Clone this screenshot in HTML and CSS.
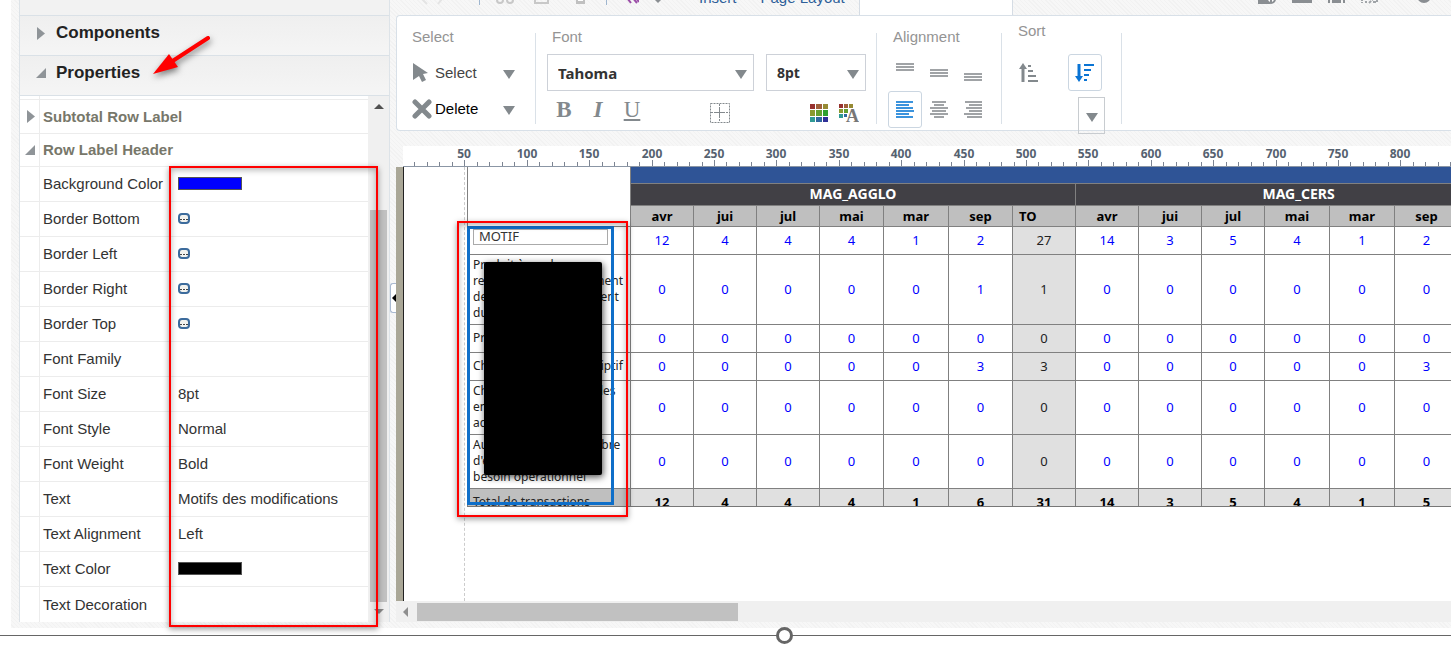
FILE: index.html
```
<!DOCTYPE html>
<html lang="en">
<head>
    <meta charset="UTF-8">
    <meta name="viewport" content="width=device-width, initial-scale=1.0">
    <title>Layout Editor</title>
    <link rel="stylesheet" href="styles.css">
</head>
<body>
    <div class="app">
        <!-- Left panel -->
        <aside class="sidebar">
            <div class="panel-strip"></div>
            <button type="button" class="panel-header">
                <svg class="closed" width="9" height="13"><path d="M0 0L8 6.500L0 13z"/></svg>
                Components
            </button>
            <button type="button" class="panel-header">
                <svg width="10" height="10"><path d="M10 0V10H0z"/></svg>
                Properties
            </button>
            <svg class="arrow" width="74" height="54">
                <path d="M66 10L26 36" stroke="#f00" stroke-width="4" stroke-linecap="round"/>
                <path d="M11 46L27 26L36 39z" fill="#f00"/>
            </svg>
            <div class="tree">
                <table class="props">
                    <colgroup><col class="indent"><col class="name"><col></colgroup>
                    <tr class="stub"><td></td><td colspan="2"></td></tr>
                    <tr class="group">
                        <td><svg width="8" height="13"><path d="M0 0L8 6.500L0 13z"/></svg></td>
                        <th colspan="2">Subtotal Row Label</th>
                    </tr>
                    <tr class="group open">
                        <td><svg width="10" height="10"><path d="M10 0V10H0z"/></svg></td>
                        <th colspan="2">Row Label Header</th>
                    </tr>
                    <tr><td></td><td>Background Color</td><td><span class="swatch blue"></span></td></tr>
                    <tr><td></td><td>Border Bottom</td><td><button type="button" class="more" aria-label="Edit border bottom"></button></td></tr>
                    <tr><td></td><td>Border Left</td><td><button type="button" class="more" aria-label="Edit border left"></button></td></tr>
                    <tr><td></td><td>Border Right</td><td><button type="button" class="more" aria-label="Edit border right"></button></td></tr>
                    <tr><td></td><td>Border Top</td><td><button type="button" class="more" aria-label="Edit border top"></button></td></tr>
                    <tr><td></td><td>Font Family</td><td></td></tr>
                    <tr><td></td><td>Font Size</td><td>8pt</td></tr>
                    <tr><td></td><td>Font Style</td><td>Normal</td></tr>
                    <tr><td></td><td>Font Weight</td><td>Bold</td></tr>
                    <tr><td></td><td>Text</td><td>Motifs des modifications</td></tr>
                    <tr><td></td><td>Text Alignment</td><td>Left</td></tr>
                    <tr><td></td><td>Text Color</td><td><span class="swatch black"></span></td></tr>
                    <tr><td></td><td>Text Decoration</td><td></td></tr>
                </table>
                <div class="vscroll">
                    <svg width="10" height="5"><path d="M0 5L5 0L10 5z" fill="#505050"/></svg>
                    <div class="thumb"></div>
                    <svg width="10" height="5"><path d="M0 0H10L5 5z" fill="#8a8a8a"/></svg>
                </div>
                <div class="highlight props-highlight"></div>
            </div>
        </aside>

        <div class="splitter">
            <button type="button" aria-label="Collapse panel"><svg width="4" height="8"><path d="M4 0V8L0 4z"/></svg></button>
        </div>

        <main>
            <!-- Menu bar -->
            <div class="menubar">
                <nav>
                    <div class="tools">
                        <svg class="undo" width="30" height="16"><path d="M4 9l5 5M24 9l-4 5" fill="none" stroke="#e4e4e4" stroke-width="2"/></svg>
                        <i class="bar"></i>
                        <svg class="cut" width="18" height="16" fill="none" stroke="#c8c8c8" stroke-width="2"><circle cx="4" cy="10" r="3"/><circle cx="14" cy="10" r="3"/></svg>
                        <svg class="copy" width="20" height="16" fill="none" stroke="#c8c8c8" stroke-width="2"><path d="M5 3V13H18V3M8 9H15M0 8H3"/></svg>
                        <svg class="paste" width="20" height="16" fill="#c0c0c0"><path d="M0 8H8V10H0zM10 4H19V14H10z"/><path d="M12 9H17V11H12z" fill="#fff"/></svg>
                        <i class="bar"></i>
                        <svg class="find" width="14" height="16" fill="none" stroke="#9b4fa8" stroke-width="2"><path d="M7 4L2 8L6 13M7 7L12 13M9 5L14 12"/></svg>
                        <svg width="12" height="16"><path d="M0 7H12L6 13z" fill="#8a8e92"/></svg>
                    </div>
                    <a href="#">Insert</a>
                    <a href="#" class="page-layout">Page Layout</a>
                    <span class="tab"></span>
                    <div class="actions">
                        <svg width="18" height="16" fill="#8a8e92"><path d="M0 0H12V14H0z"/><circle cx="13" cy="9" r="4" fill="#fff" stroke="#8a8e92" stroke-width="2"/><path d="M12 6H14V12H12z"/></svg>
                        <svg width="20" height="16" fill="#8a8e92"><path d="M0 3H20V13H0z"/></svg>
                        <svg width="17" height="16" fill="#8a8e92"><path d="M0 0H2V13H0zM4 8H13V13H4zM15 0H17V13H15z"/></svg>
                        <svg width="17" height="16" fill="none" stroke="#a0a4a8" stroke-width="2"><path d="M1 0V13M5 7V13M8 13L14 7M12 12H16V4" stroke-dasharray="3 1"/></svg>
                        <svg class="help" width="17" height="16" fill="#8a8e92"><circle cx="8" cy="6" r="7"/><path d="M7 8H10V10H7z" fill="#fff"/></svg>
                    </div>
                </nav>
            </div>

            <!-- Toolbar -->
            <div class="toolbar">
                <section class="select-group">
                    <h2>Select</h2>
                    <div class="row">
                        <button type="button" class="cmd">
                            <svg width="20" height="20" fill="#83898d"><path d="M1 0L16 10L11 11L14 17L10 19L7 13L1 17z"/></svg>
                            Select
                            <svg class="caret" width="12" height="9"><path d="M0 0H12L6 9z"/></svg>
                        </button>
                    </div>
                    <div class="row">
                        <button type="button" class="cmd delete">
                            <svg width="20" height="20"><path d="M3 3L17 17M17 3L3 17" stroke="#83898d" stroke-width="5" stroke-linecap="round"/></svg>
                            Delete
                            <svg class="caret" width="12" height="9"><path d="M0 0H12L6 9z"/></svg>
                        </button>
                    </div>
                </section>
                <i class="sep"></i>
                <section class="font-group">
                    <h2>Font</h2>
                    <div class="row">
                        <div class="combo family">
                            <select aria-label="Font family"><option>Tahoma</option></select>
                            <svg width="12" height="9"><path d="M0 0H12L6 9z"/></svg>
                        </div>
                        <div class="combo size">
                            <select aria-label="Font size"><option>8pt</option></select>
                            <svg width="12" height="9"><path d="M0 0H12L6 9z"/></svg>
                        </div>
                    </div>
                    <div class="row styles">
                        <button type="button" class="b">B</button>
                        <button type="button" class="i">I</button>
                        <button type="button" class="u">U</button>
                        <button type="button" class="borders" aria-label="Borders">
                            <svg width="20" height="20" fill="none" stroke="#83898d"><path d="M0.500 0.500H19.500V19.500H0.500zM9.500 1V7M9.500 13V19M1 9.500H7M13 9.500H19" stroke-dasharray="2 1"/><path d="M6 9.500H14M9.500 6V14"/></svg>
                        </button>
                        <button type="button" class="fill" aria-label="Background color">
                            <svg width="18" height="18">
                                <path d="M0 0h5v5h-5z" fill="#97312f"/><path d="M6 0h6v5h-6z" fill="#a0603a"/><path d="M13 0h5v5h-5z" fill="#968a34"/>
                                <path d="M0 6h5v6h-5z" fill="#8a9a30"/><path d="M6 6h6v6h-6z" fill="#63a030"/><path d="M13 6h5v6h-5z" fill="#30a030"/>
                                <path d="M0 13h5v5h-5z" fill="#309a94"/><path d="M6 13h6v5h-6z" fill="#3068a0"/><path d="M13 13h5v5h-5z" fill="#303098"/>
                            </svg>
                        </button>
                        <button type="button" class="color" aria-label="Font color">
                            <svg width="20" height="20">
                                <path d="M0 1h4v4h-4z" fill="#97312f"/><path d="M5 1h4v4h-4z" fill="#a0603a"/><path d="M10 1h4v4h-4z" fill="#968a34"/>
                                <path d="M0 6h4v4h-4z" fill="#8a9a30"/><path d="M5 6h4v4h-4z" fill="#63a030"/><path d="M0 11h4v4h-4z" fill="#309a94"/><path d="M5 11h3v3h-3z" fill="#3068a0"/>
                                <text x="7" y="19">A</text>
                            </svg>
                        </button>
                    </div>
                </section>
                <i class="sep"></i>
                <section class="align-group">
                    <h2>Alignment</h2>
                    <div class="row">
                        <button type="button" class="tool top" aria-label="Align top"><svg width="18" height="8"><path d="M0 1H18M0 4H18M0 7H18"/></svg></button>
                        <button type="button" class="tool" aria-label="Align middle"><svg width="18" height="8"><path d="M0 1H18M0 4H18M0 7H18"/></svg></button>
                        <button type="button" class="tool bottom" aria-label="Align bottom"><svg width="18" height="8"><path d="M0 1H18M0 4H18M0 7H18"/></svg></button>
                    </div>
                    <div class="row">
                        <button type="button" class="tool active" aria-label="Align left"><svg width="18" height="18"><path d="M0 1H17M0 4H13M0 7H17M0 10H18M0 13H13M0 16H17"/></svg></button>
                        <button type="button" class="tool" aria-label="Align center"><svg width="18" height="18"><path d="M2 1H16M4 4H14M0 7H18M2 10H16M0 13H18M4 16H14"/></svg></button>
                        <button type="button" class="tool" aria-label="Align right"><svg width="18" height="18"><path d="M1 1H18M5 4H18M2 7H18M5 10H18M0 13H18M3 16H18"/></svg></button>
                    </div>
                </section>
                <i class="sep"></i>
                <section class="sort-group">
                    <h2>Sort</h2>
                    <div class="row">
                        <button type="button" class="tool asc" aria-label="Sort ascending">
                            <svg width="20" height="20"><path d="M4 19V3" stroke="#83898d" stroke-width="3"/><path d="M9 3H12M9 8H14M9 13H17M9 18H19" stroke="#83898d" stroke-width="2"/><path d="M0 6L4 0L8 6z" fill="#83898d"/></svg>
                        </button>
                        <button type="button" class="tool active desc" aria-label="Sort descending">
                            <svg width="20" height="20"><path d="M4 1V16" stroke="#0a74d4" stroke-width="3"/><path d="M9 2H19M9 7H16M9 12H14M9 17H12" stroke="#0a74d4" stroke-width="2"/><path d="M0 13L4 19L8 13z" fill="#0a74d4"/></svg>
                        </button>
                    </div>
                    <button type="button" class="more-sort" aria-label="More sort options"><svg width="12" height="9"><path d="M0 0H12L6 9z"/></svg></button>
                </section>
                <i class="sep"></i>
            </div>

            <svg class="ruler" id="ruler" height="21"></svg>

            <!-- Report page -->
            <div class="canvas">
                <div class="margin-line"></div>
                <div class="report">
                    <div class="clip">
                        <table class="pivot">
                            <colgroup>
                                <col class="label">
                                <col class="w63"><col class="w63"><col class="w63"><col class="w64"><col class="w65"><col class="w64"><col class="w63">
                                <col class="w63"><col class="w63"><col class="w63"><col class="w65"><col class="w65"><col class="w64"><col class="w63">
                            </colgroup>
                            <thead>
                                <tr class="band"><td rowspan="3" class="corner"></td><td colspan="14"></td></tr>
                                <tr class="store"><th colspan="7">MAG_AGGLO</th><th colspan="7">MAG_CERS</th></tr>
                                <tr class="month"><th>avr</th><th>jui</th><th>jul</th><th>mai</th><th>mar</th><th>sep</th><th class="to">TO</th><th>avr</th><th>jui</th><th>jul</th><th>mai</th><th>mar</th><th>sep</th></tr>
                            </thead>
                            <tbody>
                                <tr class="h28"><th>S/O</th><td>12</td><td>4</td><td>4</td><td>4</td><td>1</td><td>2</td><td class="sum">27</td><td>14</td><td>3</td><td>5</td><td>4</td><td>1</td><td>2</td></tr>
                                <tr class="h70"><th>Produit à rendre<br>re<i></i>ement<br>de<i></i>ment<br>du</th><td>0</td><td>0</td><td>0</td><td>0</td><td>0</td><td>1</td><td class="sum">1</td><td>0</td><td>0</td><td>0</td><td>0</td><td>0</td><td>0</td></tr>
                                <tr class="h28"><th>Pr</th><td>0</td><td>0</td><td>0</td><td>0</td><td>0</td><td>0</td><td class="sum">0</td><td>0</td><td>0</td><td>0</td><td>0</td><td>0</td><td>0</td></tr>
                                <tr class="h28"><th>Ch<i></i>criptif</th><td>0</td><td>0</td><td>0</td><td>0</td><td>0</td><td>3</td><td class="sum">3</td><td>0</td><td>0</td><td>0</td><td>0</td><td>0</td><td>3</td></tr>
                                <tr class="h54"><th>Ch<i></i>elles<br>en<br>ac</th><td>0</td><td>0</td><td>0</td><td>0</td><td>0</td><td>0</td><td class="sum">0</td><td>0</td><td>0</td><td>0</td><td>0</td><td>0</td><td>0</td></tr>
                                <tr class="h54"><th>Au<i></i>mbre<br>d'e<br>besoin opérationnel</th><td>0</td><td>0</td><td>0</td><td>0</td><td>0</td><td>0</td><td class="sum">0</td><td>0</td><td>0</td><td>0</td><td>0</td><td>0</td><td>0</td></tr>
                                <tr class="total"><th>Total de transactions</th><td>12</td><td>4</td><td>4</td><td>4</td><td>1</td><td>6</td><td>31</td><td>14</td><td>3</td><td>5</td><td>4</td><td>1</td><td>5</td></tr>
                            </tbody>
                        </table>
                    </div>
                    <div class="selection"><span>MOTIF</span></div>
                    <div class="mask"></div>
                    <div class="highlight label-highlight"></div>
                </div>
            </div>

            <div class="hscroll">
                <svg width="5" height="10"><path d="M5 0V10L0 5z" fill="#8f8f8f"/></svg>
                <div class="track"><div class="thumb"></div></div>
            </div>
        </main>
    </div>

    <div class="divider"><span></span></div>
    <script src="ruler.js"></script>
</body>
</html>
```
FILE: styles.css
```
* {
    box-sizing: border-box;
}

body {
    margin: 0;
    font-family: "Liberation Sans", Arial, sans-serif;
    font-size: 15px;
    color: #333;
    background-color: #fff;
}

button {
    font: inherit;
    color: inherit;
    background: none;
    border: none;
    padding: 0;
}

svg {
    display: block;
    flex: none;
}

.app {
    display: flex;
    margin-left: 11px;
    padding: 0 0 6px 8px;
    background: repeating-linear-gradient(45deg, #f7f7f7 0 2px, #f2f2f2 2px 3px);
}

/* Left panel */
.sidebar {
    position: relative;
    flex: none;
    width: 371px;
    border: solid #dde3e8;
    border-width: 0 1px;
    background-color: #f2f2f2;
}

.panel-strip {
    height: 15px;
}

.panel-header {
    display: flex;
    align-items: center;
    gap: 10px;
    width: 100%;
    height: 40px;
    padding: 0 16px 5px;
    border-top: 1px solid #dae1e7;
    background: linear-gradient(#efefef, #f5f5f5);
    font-size: 17px;
    font-weight: bold;
    color: #222;
}

.panel-header svg {
    fill: #8f9498;
}

.panel-header .closed {
    margin-left: 1px;
}

.arrow {
    position: absolute;
    left: 122px;
    top: 28px;
    filter: drop-shadow(1px 3px 3px rgba(0, 0, 0, 0.5));
}

.tree {
    position: relative;
    display: flex;
    border-top: 1px solid #dae1e7;
    background-color: #fff;
}

.props {
    flex: 1;
    table-layout: fixed;
    border-spacing: 0;
}

.props .indent {
    width: 20px;
}

.props .name {
    width: 130px;
}

.props td,
.props th {
    height: 35px;
    padding: 0 0 1px 3px;
    border-bottom: 1px solid #ececec;
    text-align: left;
    white-space: nowrap;
}

.props td:first-child {
    padding: 0 0 1px;
    border-right: 1px solid #ececec;
}

.props td:nth-child(3) {
    padding-left: 8px;
}

.props tr:last-child td {
    border-bottom: none;
}

.props .stub td {
    height: 4px;
}

.props .group td,
.props .group th {
    height: 34px;
    color: #77776a;
}

.props .open td,
.props .open th {
    height: 33px;
}

.props .group svg {
    margin-left: 7px;
    fill: #8f9498;
}

.props .open svg {
    margin-left: 5px;
}

.swatch {
    display: block;
    width: 64px;
    height: 13px;
    border: 1px solid #555;
}

.blue {
    background-color: #00f;
}

.black {
    background-color: #000;
}

.more {
    display: block;
    width: 12px;
    height: 11px;
    border: 2px solid #3c6b9c;
    border-radius: 4px;
    background: repeating-linear-gradient(90deg, #444 0 2px, #fff 2px 3px) 0 4px / 8px 1px no-repeat #f2f2ee;
}

.vscroll {
    display: flex;
    flex-direction: column;
    align-items: center;
    width: 21px;
    padding: 8px 0 8px;
    background-color: #f0f0f0;
}

.vscroll .thumb {
    flex: 1;
    width: 17px;
    margin: 101px 0 7px;
    background-color: #c1c1c1;
}

.highlight {
    position: absolute;
    border: 2px solid #f00;
    box-shadow: 0 2px 6px rgba(0, 0, 0, 0.4), inset 0 2px 6px rgba(0, 0, 0, 0.3);
}

.props-highlight {
    left: 149px;
    top: 70px;
    width: 209px;
    bottom: -5px;
}

.splitter {
    display: flex;
    align-items: center;
    flex: none;
    width: 6px;
    padding-bottom: 26px;
}

.splitter button {
    display: flex;
    align-items: center;
    width: 6px;
    height: 30px;
    padding-left: 1px;
    border: 1px solid #a9b9d0;
    border-right: none;
    border-radius: 3px 0 0 3px;
    background-color: #fff;
}

main {
    flex: 1;
    display: flex;
    flex-direction: column;
    min-width: 0;
}

/* Menu bar, scrolled half out of view */
.menubar {
    display: flex;
    align-items: flex-end;
    height: 15px;
    overflow: hidden;
}

.menubar nav {
    display: flex;
    align-items: center;
    flex: 1;
    height: 34px;
}

.tools {
    display: flex;
    align-items: center;
    width: 303px;
    padding-left: 22px;
}

.bar {
    width: 1px;
    height: 14px;
    background-color: #9fb6cf;
}

.undo {
    margin-right: 31px;
}

.cut {
    margin: 0 16px;
}

.copy {
    margin-right: 16px;
}

.paste {
    margin-right: 20px;
}

.find {
    margin: 0 13px 0 18px;
}

.menubar a {
    padding-bottom: 1px;
    color: #2e5f99;
    text-decoration: none;
}

.menubar .page-layout {
    margin-left: 24px;
}

.tab {
    align-self: stretch;
    width: 154px;
    margin-left: 14px;
    border: solid #d5dce4;
    border-width: 0 1px;
    background-color: #fff;
}

.actions {
    display: flex;
    gap: 16px;
    margin-left: auto;
    padding-right: 18px;
}

.actions .help {
    margin-left: 22px;
}

/* Toolbar */
.toolbar {
    display: flex;
    align-items: flex-start;
    height: 116px;
    border: solid #d8e0e8;
    border-width: 1px 0 1px 1px;
    border-radius: 4px 0 0 4px;
    background-color: #fff;
}

.sep {
    width: 1px;
    height: 91px;
    margin-top: 17px;
    background-color: #dae1e8;
}

.toolbar section {
    padding-top: 12px;
}

.toolbar h2 {
    margin: 0 0 8px;
    font-size: 15px;
    font-weight: normal;
    line-height: 18px;
    color: #949494;
}

.toolbar .row {
    display: flex;
    align-items: center;
    height: 37px;
}

.toolbar .select-group {
    width: 138px;
    padding-left: 15px;
}

.cmd {
    display: flex;
    align-items: center;
    gap: 3px;
    width: 103px;
    color: #444;
}

.cmd.delete {
    padding-bottom: 2px;
    color: #000;
}

.caret {
    margin: 4px 0 0 auto;
}

.caret,
.combo svg,
.more-sort svg {
    fill: #83898d;
}

.toolbar .font-group {
    width: 340px;
    padding-left: 11px;
}

.font-group h2 {
    padding-left: 5px;
}

.combo {
    position: relative;
}

.combo svg {
    position: absolute;
    right: 7px;
    top: 16px;
    pointer-events: none;
}

.combo select {
    width: 100%;
    height: 37px;
    padding: 0 10px;
    border: 1px solid #cdd1d8;
    appearance: none;
    background-color: #fff;
    font-family: "Noto Sans", sans-serif;
    font-size: 14px;
    font-weight: bold;
    color: #333;
}

.family {
    width: 207px;
    margin-right: 12px;
}

.combo.family select {
    font-size: 15px;
}

.size {
    width: 100px;
}

.styles button {
    font-family: "Liberation Serif", serif;
    font-size: 23px;
    line-height: 24px;
    color: #83898d;
}

.styles .b {
    width: 34px;
    font-weight: bold;
}

.styles .i {
    width: 34px;
    font-style: italic;
    font-weight: bold;
}

.styles .u {
    width: 34px;
    text-decoration: underline;
}

.styles .borders {
    margin-left: 61px;
}

.styles .fill {
    margin-left: 80px;
}

.styles .color {
    margin-left: 11px;
}

.styles .borders,
.styles .fill,
.styles .color {
    padding-top: 6px;
}

.styles text {
    font-size: 18px;
    font-weight: bold;
    fill: #777;
}

.toolbar .align-group {
    width: 124px;
    padding-left: 11px;
}

.align-group h2 {
    padding-left: 5px;
}

.tool {
    display: flex;
    align-items: center;
    justify-content: center;
    width: 34px;
    height: 37px;
    border: 1px solid transparent;
    border-radius: 3px;
}

.align-group svg {
    stroke: #a0a3a6;
    stroke-width: 2;
}

.tool.active {
    border-color: #cbd6e1;
}

.align-group .active svg {
    stroke: #3b93dd;
}

.top {
    padding-bottom: 12px;
}

.bottom {
    padding-top: 8px;
}

.toolbar .sort-group {
    width: 119px;
    padding: 6px 0 0 10px;
}

.sort-group h2 {
    margin-bottom: 14px;
    padding-left: 6px;
}

.desc {
    margin-left: 22px;
}

.more-sort {
    display: flex;
    align-items: center;
    justify-content: center;
    width: 27px;
    height: 37px;
    margin: 6px 0 0 66px;
    padding-top: 4px;
    border: 1px solid #c8ccd0;
}

/* Ruler */
.ruler {
    align-self: stretch;
    margin: 15px 0 0 7px;
    border-bottom: 1px solid #8b96a5;
    background-color: #fff;
}

.ruler line {
    stroke: #7c8492;
}

.ruler text {
    font-family: "Noto Sans", sans-serif;
    font-size: 12px;
    font-weight: bold;
    fill: #566270;
    text-anchor: middle;
}

/* Report page */
.canvas {
    position: relative;
    flex: 1;
    overflow: hidden;
    border-left: 7px solid #aaa797;
    background-color: #fff;
    box-shadow: inset 1px 0 #222;
}

.margin-line {
    position: absolute;
    left: 61px;
    top: 0;
    bottom: 0;
    border-left: 1px dashed #ccc;
}

.report {
    position: relative;
    margin-left: 64px;
}

.clip {
    height: 340px;
    overflow: hidden;
    border-bottom: 1px solid #777;
}

.pivot {
    width: 1054px;
    table-layout: fixed;
    border-collapse: collapse;
    font-family: "Noto Sans", sans-serif;
    font-size: 13px;
    line-height: 16px;
}

.pivot .label {
    width: 163px;
}

.w63 {
    width: 63px;
}

.w64 {
    width: 64px;
}

.w65 {
    width: 65px;
}

.pivot td,
.pivot th {
    padding: 0;
    border: 1px solid #808080;
    text-align: center;
}

.pivot td {
    color: #00f;
}

.pivot .corner {
    border-top: none;
}

.pivot .band td {
    height: 16px;
    border-top: none;
}

.pivot .band td + td {
    background-color: #2f5496;
}

.pivot .store th {
    height: 22px;
    background-color: #414045;
    font-size: 14px;
    color: #fff;
}

.pivot .month th {
    height: 21px;
    background-color: #bfbfbf;
    color: #000;
}

.pivot .month .to {
    padding-left: 6px;
    text-align: left;
}

.pivot tbody th {
    padding-left: 5px;
    font-size: 12px;
    font-weight: normal;
    text-align: left;
    white-space: nowrap;
    color: #222;
}

/* part of the label that sits under the mask */
.pivot i {
    display: inline-block;
    width: 102px;
}

.h28 {
    height: 28px;
}

.h70 {
    height: 70px;
}

.h54 {
    height: 54px;
}

.pivot .sum {
    background-color: #e0e0e0;
    color: #222;
}

.total {
    height: 28px;
}

.pivot .total td {
    background-color: #e0e0e0;
    font-weight: bold;
    color: #000;
}

.pivot .total th {
    background-color: #bfbfbf;
}

.selection {
    position: absolute;
    left: 0;
    top: 59px;
    width: 147px;
    height: 279px;
    padding: 0 3px;
    border: 3px solid #0f6fc9;
}

.selection span {
    display: block;
    width: 135px;
    height: 16px;
    padding-left: 5px;
    border: 1px solid #aaa;
    background-color: #fff;
    font-family: "Noto Sans", sans-serif;
    font-size: 13px;
    line-height: 12px;
}

.mask {
    position: absolute;
    left: 17px;
    top: 95px;
    width: 118px;
    height: 213px;
    border-radius: 2px;
    background-color: #000;
    box-shadow: 1px 2px 7px rgba(0, 0, 0, 0.7);
}

.label-highlight {
    left: -10px;
    top: 54px;
    width: 171px;
    height: 296px;
}

.hscroll {
    display: flex;
    align-items: center;
    height: 21px;
    padding-left: 7px;
    background-color: #f0f0f0;
}

.track {
    flex: 1;
    margin-left: 9px;
}

.hscroll .thumb {
    width: 31%;
    height: 18px;
    background-color: #c1c1c1;
}

/* Bottom divider */
.divider {
    position: relative;
    height: 17px;
    margin-top: -1px;
    padding-left: calc(54% - 8px);
    background: linear-gradient(#666, #666) 0 8px / 100% 1px no-repeat;
}

.divider span {
    display: block;
    width: 17px;
    height: 17px;
    border: 3px solid #666;
    border-radius: 50%;
    background-color: #fff;
}
```
FILE: ruler.js
```
// Draw the horizontal ruler: a tick every 10 units, a label every 50
const ruler = document.getElementById('ruler');
const step = 12.48;
let marks = '';

for (let i = 1; i * step < ruler.clientWidth + 100; i++) {
    const x = Math.round(i * step) - 1;
    const major = i % 5 === 0;
    marks += `<line x1="${x}.5" x2="${x}.5" y1="${major ? 14 : 16}" y2="21"/>`;
    if (major) {
        marks += `<text x="${x}" y="12">${i * 10}</text>`;
    }
}

ruler.innerHTML = marks;
```
